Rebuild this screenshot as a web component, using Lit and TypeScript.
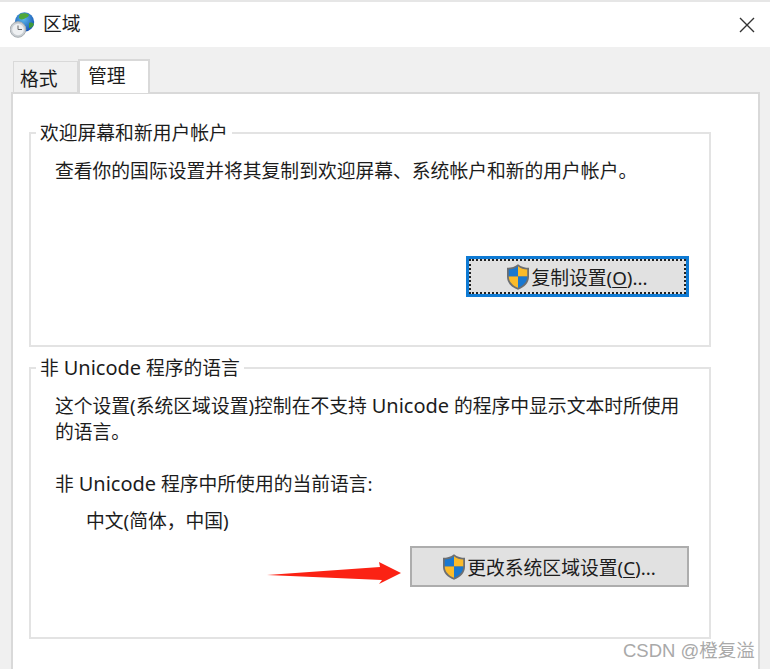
import { LitElement, html, css } from "lit";
import { customElement } from "lit/decorators.js";

const shield = html`<svg class="shield" viewBox="1.5 1 21 24.5" width="22" height="26">
  <path d="M12 1 C9 3.5 5 4.5 1.5 4.5 V13 C1.5 19 6 23 12 25.5 C18 23 22.5 19 22.5 13 V4.5 C19 4.5 15 3.5 12 1Z" fill="#6d6f72"/>
  <path d="M12 3 C9.5 5 6.2 6 3.2 6.2 V12.8 H12Z" fill="#1a78d0"/>
  <path d="M12 3 C14.5 5 17.8 6 20.8 6.2 V12.8 H12Z" fill="#fbbb2a"/>
  <path d="M3.2 12.8 H12 V23.6 C7 21.5 3.2 18 3.2 12.8Z" fill="#fbbb2a"/>
  <path d="M20.8 12.8 H12 V23.6 C17 21.5 20.8 18 20.8 12.8Z" fill="#1a78d0"/>
</svg>`;

const uni = html`<span class="latin">Unicode</span>`;

@customElement("app-root")
export class AppRoot extends LitElement {
  static styles = css`
    :host {
      display: block;
      width: 770px;
      height: 669px;
      overflow: hidden;
      position: relative;
      background: #fff;
      color: #1c1c1c;
      font-family: "Noto Sans", "Noto Sans CJK SC", sans-serif;
      font-size: 18.8px;
      line-height: 26px;
    }
    .latin { font-size: 20px; line-height: 1; }
    .topline { height: 2px; background: #e6e6e6; }
    .title {
      height: 45px;
      display: flex;
      align-items: center;
      padding: 0 0 0 10px;
      gap: 8px;
    }
    .title span { position: relative; top: -1px; }
    .close { margin-left: auto; margin-right: 15px; display: block; }
    .body {
      background: #f0f0f0;
      height: 622px;
      padding: 12px 0 0 11px;
      box-sizing: border-box;
    }
    .tabs { display: flex; align-items: flex-end; height: 33px; padding-left: 2px; }
    .tab {
      box-sizing: border-box;
      height: 31px;
      width: 65px;
      border: 1px solid #d9d9d9;
      border-bottom: none;
      padding: 4px 0 0 6px;
    }
    .tab.on {
      height: 34px;
      width: 72px;
      background: #fff;
      border-width: 2px 2px 0 2px;
      margin-bottom: -1px;
      position: relative;
      z-index: 1;
      padding: 2px 0 0 8px;
    }
    .panel {
      background: #fff;
      border: solid #d9d9d9;
      border-width: 2px 2px 0 2px;
      width: 749px;
      height: 600px;
      box-sizing: border-box;
      padding: 38px 0 0 16px;
    }
    .group {
      box-sizing: border-box;
      width: 682px;
      border: 2px solid #e3e3e3;
      position: relative;
      padding-left: 24px;
    }
    .g1 { height: 215px; padding-top: 24px; }
    .g2 { height: 272px; margin-top: 20px; padding-top: 24px; }
    .legend {
      position: absolute;
      top: -14px;
      left: 5px;
      padding: 0 4px;
      background: #fff;
    }
    .line { white-space: nowrap; }
    .current { margin-top: 26px; }
    .lang { margin-top: 11px; padding-left: 31px; }
    .btn {
      box-sizing: border-box;
      background: #e1e1e1;
      display: flex;
      align-items: center;
      justify-content: center;
    }
    .btn u { text-underline-offset: 2px; }
    .btn span { padding-top: 2px; }
    .b1 {
      margin: 72px 0 0 411px;
      width: 223px;
      height: 41px;
      border: 3px solid #0f7bd4;
      outline: 2px dotted #222;
      outline-offset: -5px;
    }
    .b2 {
      margin: 12px 0 0 355px;
      width: 279px;
      height: 41px;
      border: 2px solid #adadad;
    }
    .shield { margin-right: 2px; flex: none; }
    .arrow { position: absolute; left: 266px; top: 560px; }
    .wm {
      position: absolute;
      left: 623px;
      top: 638px;
      font-family: "Liberation Sans", "Noto Sans CJK SC", sans-serif;
      font-size: 18.5px;
      color: #a9a9a9;
      white-space: nowrap;
    }
  `;

  render() {
    return html`
      <div class="topline"></div>
      <div class="title">
        <svg width="25" height="26" viewBox="0 0 25 26">
          <defs>
            <radialGradient id="g" cx="45%" cy="35%" r="70%">
              <stop offset="0" stop-color="#5cb8ea"/><stop offset="1" stop-color="#0f4cb0"/>
            </radialGradient>
          </defs>
          <circle cx="14.5" cy="10" r="9.7" fill="url(#g)"/>
          <path d="M10 2 C13 .5 18 1 19 3 C18 6 16 5 14 7 C11 8 9 7 9 5Z" fill="#4fa83a"/>
          <path d="M19 11 C21 10 23 11 24 12 C23 15 21 16 19 16Z" fill="#3f9a3a"/>
          <circle cx="8" cy="17.5" r="7.8" fill="#c9ced2" stroke="#a8aeb3" stroke-width="1"/>
          <circle cx="8" cy="17.5" r="5.8" fill="#eef0f2"/>
          <path d="M8 13.5 V17.5 H12" fill="none" stroke="#666" stroke-width="1"/>
        </svg>
        <span>区域</span>
        <svg class="close" width="16" height="16" viewBox="0 0 16 16">
          <path d="M1 1 L15 15 M15 1 L1 15" stroke="#333" stroke-width="1.4" fill="none"/>
        </svg>
      </div>
      <div class="body">
        <div class="tabs">
          <div class="tab">格式</div>
          <div class="tab on">管理</div>
        </div>
        <div class="panel">
          <div class="group g1">
            <div class="legend">欢迎屏幕和新用户帐户</div>
            <div class="line">查看你的国际设置并将其复制到欢迎屏幕、系统帐户和新的用户帐户。</div>
            <div class="btn b1">${shield}<span>复制设置(<u>O</u>)...</span></div>
          </div>
          <div class="group g2">
            <div class="legend">非 ${uni} 程序的语言</div>
            <div class="line">这个设置(系统区域设置)控制在不支持 ${uni} 的程序中显示文本时所使用<br />的语言。</div>
            <div class="line current">非 ${uni} 程序中所使用的当前语言:</div>
            <div class="line lang">中文(简体，中国)</div>
            <div class="btn b2">${shield}<span>更改系统区域设置(<u>C</u>)...</span></div>
          </div>
        </div>
      </div>
      <svg class="arrow" width="136" height="26" viewBox="0 0 136 26">
        <path d="M1 15 L114 7 L113 2 L135 13 L113 24 L116 20 Z" fill="#fb2214"/>
      </svg>
      <div class="wm">CSDN @橙复溢</div>
    `;
  }
}
